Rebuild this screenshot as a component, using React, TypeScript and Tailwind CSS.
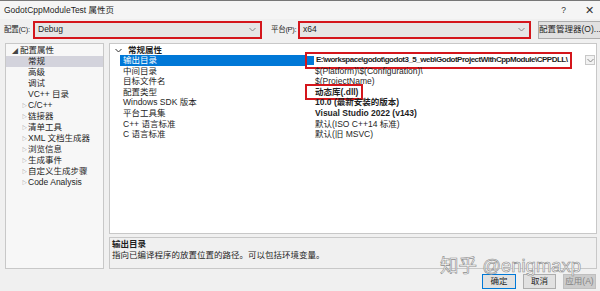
import React from "react";

const TREE = [
  { label: "配置属性", depth: 0, arrow: "open" },
  { label: "常规", depth: 1, selected: true },
  { label: "高级", depth: 1 },
  { label: "调试", depth: 1 },
  { label: "VC++ 目录", depth: 1 },
  { label: "C/C++", depth: 1, arrow: "closed" },
  { label: "链接器", depth: 1, arrow: "closed" },
  { label: "清单工具", depth: 1, arrow: "closed" },
  { label: "XML 文档生成器", depth: 1, arrow: "closed" },
  { label: "浏览信息", depth: 1, arrow: "closed" },
  { label: "生成事件", depth: 1, arrow: "closed" },
  { label: "自定义生成步骤", depth: 1, arrow: "closed" },
  { label: "Code Analysis", depth: 1, arrow: "closed" },
];

const PROPS = [
  { name: "输出目录", value: "E:\\workspace\\godot\\godot3_5_web\\GodotProjectWithCppModule\\CPPDLL\\", bold: true, selected: true, mark: true },
  { name: "中间目录", value: "$(Platform)\\$(Configuration)\\" },
  { name: "目标文件名", value: "$(ProjectName)" },
  { name: "配置类型", value: "动态库(.dll)", bold: true, mark: true },
  { name: "Windows SDK 版本", value: "10.0 (最新安装的版本)", bold: true },
  { name: "平台工具集", value: "Visual Studio 2022 (v143)", bold: true },
  { name: "C++ 语言标准", value: "默认(ISO C++14 标准)" },
  { name: "C 语言标准", value: "默认(旧 MSVC)" },
];

function Chevron() {
  return (
    <svg width="7" height="5" viewBox="0 0 7 5" className="shrink-0">
      <path d="M0.5 1 L3.5 4 L6.5 1" fill="none" stroke="#888" strokeWidth="1" />
    </svg>
  );
}

function Combo({ value, className }: { value: string; className: string }) {
  return (
    <div className={`flex h-[18px] shrink-0 items-center justify-between border-2 border-[#d4161c] bg-[#e6e6e6] pl-[3px] pr-[4px] ${className}`}>
      <span>{value}</span>
      <Chevron />
    </div>
  );
}

function TreeItem({ item }: { item: (typeof TREE)[number] }) {
  return (
    <div
      className={`flex h-[11px] items-center whitespace-nowrap ${item.selected ? "bg-[#d3d3dc]" : ""}`}
      style={{ paddingLeft: item.depth === 0 ? 6 : item.arrow ? 16 : 22 }}
    >
      {item.arrow === "open" && <span className="mr-[2px] w-[6px] text-[6px] text-[#444]">◢</span>}
      {item.arrow === "closed" && <span className="w-[6px] text-[5px] text-[#777]">▷</span>}
      <span>{item.label}</span>
    </div>
  );
}

export default function App() {
  return (
    <div
      className="relative h-[291px] w-[600px] overflow-hidden whitespace-nowrap bg-[#f0f0f0] text-[8.5px] leading-none text-[#1e1e1e]"
      style={{ fontFamily: '"Liberation Sans", "Noto Sans CJK SC", sans-serif' }}
    >
      <div className="flex h-[19px] items-center justify-between border-t border-[#777] bg-[#f5f5f5] pl-[4px] pr-[6px]">
        <span>GodotCppModuleTest 属性页</span>
        <div className="flex items-center gap-[19px] text-[#333]">
          <span>?</span>
          <span className="text-[11px]">✕</span>
        </div>
      </div>

      <div className="flex h-[21px] items-center pl-[4px] pr-[3px]">
        <span className="w-[29px] shrink-0 text-[7.5px] tracking-[-0.3px]">配置(C):</span>
        <Combo value="Debug" className="w-[229px]" />
        <span className="ml-[9px] w-[27px] shrink-0 text-[7.5px] tracking-[-0.3px]">平台(P):</span>
        <Combo value="x64" className="w-[233px]" />
        <div className="ml-[7px] flex h-[18px] flex-1 items-center justify-center border border-[#adadad] bg-[#e1e1e1]">
          配置管理器(O)...
        </div>
      </div>

      <div className="mt-[3px] flex h-[226px] gap-[5px] pl-[5px] pr-[3px]">
        <div className="w-[99px] shrink-0 overflow-hidden border border-[#c8c8c8] bg-[#f7f7f7] pt-[1px]">
          {TREE.map((item) => (
            <TreeItem key={item.label} item={item} />
          ))}
        </div>

        <div className="flex min-w-0 flex-1 flex-col gap-[3px]">
          <div className="h-[191px] overflow-hidden border border-[#c8c8c8] bg-white pt-[1px]">
            <div className="flex h-[10px] items-center pl-[5px] font-bold">
              <span className="mr-[6px]">
                <svg width="7" height="5" viewBox="0 0 7 5">
                  <path d="M0.5 1 L3.5 4 L6.5 1" fill="none" stroke="#333" strokeWidth="1" />
                </svg>
              </span>
              常规属性
            </div>
            {PROPS.map((p) => (
              <div key={p.name} className="flex h-[10.6px] items-center">
                {p.selected ? (
                  <div className="ml-[10px] flex h-full w-[185px] shrink-0 items-center bg-[#0078d7] pl-[3px] text-white">{p.name}</div>
                ) : (
                  <div className="flex h-full w-[195px] shrink-0 items-center pl-[13px]">{p.name}</div>
                )}
                <div className="flex h-full min-w-0 flex-1 items-center">
                  {p.mark ? (
                    <span
                      className={`flex items-center border-2 border-[#d4161c] py-[2px] pr-[3px] font-bold ${p.selected ? "text-[8px] tracking-[-0.5px]" : "pl-[8px]"}`}
                    >
                      {p.selected && <span className="mr-[2px] h-[9px] w-[7px] bg-[#0078d7]" />}
                      {p.value}
                    </span>
                  ) : (
                    <span className={`pl-[10px] ${p.bold ? "font-bold" : ""}`}>{p.value}</span>
                  )}
                  {p.selected && (
                    <div className="ml-auto mr-[1px] flex h-[10px] w-[10px] items-center justify-center border border-[#c8c8c8] bg-[#f2f2f2]">
                      <Chevron />
                    </div>
                  )}
                </div>
              </div>
            ))}
          </div>

          <div className="flex h-[32px] flex-col gap-[2px] border border-[#c8c8c8] pl-[2px] pt-[2px]">
            <span className="font-bold">输出目录</span>
            <span>指向已编译程序的放置位置的路径。可以包括环境变量。</span>
          </div>
        </div>
      </div>

      <div className="flex justify-end gap-[7px] pr-[4px] pt-[5px]">
        <div className="flex h-[15px] w-[34px] items-center justify-center border border-[#0078d7] bg-[#e1e1e1]">确定</div>
        <div className="flex h-[15px] w-[33px] items-center justify-center border border-[#adadad] bg-[#e1e1e1]">取消</div>
        <div className="flex h-[15px] w-[33px] items-center justify-center border border-[#bfbfbf] bg-[#cccccc] text-[#838383]">应用(A)</div>
      </div>

      <div className="absolute left-[440px] top-[257px] text-[18.5px] text-white [-webkit-text-stroke:0.6px_#8a8a8a]">
        知乎 @enigmaxp
      </div>
    </div>
  );
}
